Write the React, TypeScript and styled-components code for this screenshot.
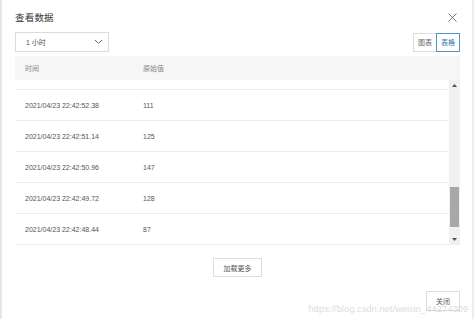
import React from "react";
import styled, { createGlobalStyle } from "styled-components";

/** ===========================================================================
 * Data viewer dialog ("查看数据")
 * ============================================================================
 */

const FONT = `"Liberation Sans", "Noto Sans CJK SC", sans-serif`;

const GlobalStyle = createGlobalStyle`
  html, body {
    margin: 0;
    padding: 0;
    background: #ffffff;
    font-family: ${FONT};
  }
`;

const ROWS = [
  { time: "2021/04/23 22:42:52.38", value: "111" },
  { time: "2021/04/23 22:42:51.14", value: "125" },
  { time: "2021/04/23 22:42:50.96", value: "147" },
  { time: "2021/04/23 22:42:49.72", value: "128" },
  { time: "2021/04/23 22:42:48.44", value: "87" },
];

/* Page ------------------------------------------------------------------- */
const Page = styled.div`
  position: relative;
  display: flex;
  width: 474px;
  height: 319px;
  overflow: hidden;
  background: #ffffff;
`;

const EdgeStrip = styled.div<{ $color: string }>`
  width: 2px;
  flex-shrink: 0;
  background: ${(p) => p.$color};
`;

const Dialog = styled.div`
  flex: 1;
  display: flex;
  flex-direction: column;
  padding: 0 12px 0 13px;
`;

/* Title bar -------------------------------------------------------------- */
const TitleBar = styled.div`
  height: 30px;
  padding-top: 2px;
  display: flex;
  align-items: center;
  justify-content: space-between;
`;

const Title = styled.h1`
  margin: 0;
  font-size: 9.5px;
  font-weight: 400;
  color: #333333;
  letter-spacing: 0.2px;
`;

const CloseX = styled.div`
  width: 10px;
  height: 10px;
  margin-right: 3px;
  display: flex;
  align-items: center;
  justify-content: center;
`;

/* Toolbar ---------------------------------------------------------------- */
const Toolbar = styled.div`
  height: 20px;
  display: flex;
  align-items: center;
  justify-content: space-between;
`;

const Select = styled.div`
  box-sizing: border-box;
  width: 94px;
  height: 20px;
  border: 1px solid #dcdcdc;
  display: flex;
  align-items: center;
  justify-content: space-between;
  padding: 0 5px 0 10px;
  font-size: 7px;
  color: #555555;
`;

const ToggleGroup = styled.div`
  display: flex;
`;

const Toggle = styled.div<{ $active?: boolean }>`
  box-sizing: border-box;
  width: 24px;
  height: 19px;
  display: flex;
  align-items: center;
  justify-content: center;
  font-size: 7px;
  color: ${(p) => (p.$active ? "#2b78b5" : "#666666")};
  border: 1px solid ${(p) => (p.$active ? "#5b93c0" : "#dddddd")};
  margin-left: ${(p) => (p.$active ? "-1px" : "0")};
`;

/* Table ------------------------------------------------------------------ */
const Table = styled.div`
  margin-top: 4px;
  display: flex;
  flex-direction: column;
`;

const HeaderRow = styled.div`
  height: 24px;
  background: #f6f6f6;
  display: flex;
  align-items: center;
  font-size: 7px;
  color: #888888;
`;

const Cell = styled.div<{ $width?: number }>`
  width: ${(p) => (p.$width ? `${p.$width}px` : "auto")};
  padding-left: 10px;
  box-sizing: border-box;
  white-space: nowrap;
`;

const Body = styled.div`
  height: 165px;
  display: flex;
`;

const RowsViewport = styled.div`
  flex: 1;
  overflow: hidden;
`;

/* the bottom sliver of the row that is scrolled out of view */
const ScrolledSliver = styled.div`
  height: 10px;
  box-sizing: border-box;
  border-bottom: 1px solid #ebebeb;
`;

const Row = styled.div`
  height: 31px;
  box-sizing: border-box;
  border-bottom: 1px solid #ebebeb;
  display: flex;
  align-items: center;
  font-size: 7px;
  color: #555555;
`;

const Scrollbar = styled.div`
  width: 11px;
  background: #f0f0f0;
  display: flex;
  flex-direction: column;
  align-items: center;
`;

const ScrollArrow = styled.div`
  height: 11px;
  display: flex;
  align-items: center;
  justify-content: center;
`;

const Track = styled.div`
  flex: 1;
  display: flex;
  flex-direction: column;
  align-items: center;
`;

const Thumb = styled.div`
  width: 9px;
  height: 40px;
  margin-top: 96px;
  background: #a8a8a8;
`;

/* Footer ----------------------------------------------------------------- */
const LoadMoreRow = styled.div`
  margin-top: 13px;
  display: flex;
  justify-content: center;
`;

const PlainButton = styled.div<{ $width: number; $height: number }>`
  box-sizing: border-box;
  width: ${(p) => p.$width}px;
  height: ${(p) => p.$height}px;
  border: 1px solid #dddddd;
  display: flex;
  align-items: center;
  justify-content: center;
  font-size: 7px;
  color: #555555;
  background: #ffffff;
`;

const FooterRow = styled.div`
  margin-top: 14px;
  display: flex;
  justify-content: flex-end;
`;

const Watermark = styled.div`
  position: absolute;
  right: 6px;
  bottom: 5px;
  font-family: ${FONT};
  font-size: 9.4px;
  color: rgba(200, 200, 200, 0.65);
  white-space: nowrap;
  pointer-events: none;
`;

/* Small icons ------------------------------------------------------------ */
const Chevron = () => (
  <svg width="9" height="6" viewBox="0 0 9 6">
    <path d="M1 1 L4.5 4.5 L8 1" fill="none" stroke="#666" strokeWidth="1" />
  </svg>
);

const Cross = () => (
  <svg width="9" height="9" viewBox="0 0 9 9">
    <path d="M0.5 0.5 L8.5 8.5 M8.5 0.5 L0.5 8.5" stroke="#666" strokeWidth="0.9" />
  </svg>
);

const Triangle = ({ up }: { up?: boolean }) => (
  <svg width="5" height="3" viewBox="0 0 5 3">
    <path d={up ? "M0 3 L2.5 0 L5 3 Z" : "M0 0 L2.5 3 L5 0 Z"} fill="#505050" />
  </svg>
);

export default function App() {
  return (
    <Page>
      <GlobalStyle />
      <EdgeStrip $color="#e6e6e6" />
      <Dialog>
        <TitleBar>
          <Title>查看数据</Title>
          <CloseX>
            <Cross />
          </CloseX>
        </TitleBar>

        <Toolbar>
          <Select>
            <span>1 小时</span>
            <Chevron />
          </Select>
          <ToggleGroup>
            <Toggle>图表</Toggle>
            <Toggle $active>表格</Toggle>
          </ToggleGroup>
        </Toolbar>

        <Table>
          <HeaderRow>
            <Cell $width={118}>时间</Cell>
            <Cell>原始值</Cell>
          </HeaderRow>
          <Body>
            <RowsViewport>
              <ScrolledSliver />
              {ROWS.map((r) => (
                <Row key={r.time}>
                  <Cell $width={118}>{r.time}</Cell>
                  <Cell>{r.value}</Cell>
                </Row>
              ))}
            </RowsViewport>
            <Scrollbar>
              <ScrollArrow>
                <Triangle up />
              </ScrollArrow>
              <Track>
                <Thumb />
              </Track>
              <ScrollArrow>
                <Triangle />
              </ScrollArrow>
            </Scrollbar>
          </Body>
        </Table>

        <LoadMoreRow>
          <PlainButton $width={49} $height={19}>加载更多</PlainButton>
        </LoadMoreRow>

        <FooterRow>
          <PlainButton $width={34} $height={20}>关闭</PlainButton>
        </FooterRow>
      </Dialog>
      <EdgeStrip $color="#ededed" />
      <Watermark>https://blog.csdn.net/weixin_44274309</Watermark>
    </Page>
  );
}
